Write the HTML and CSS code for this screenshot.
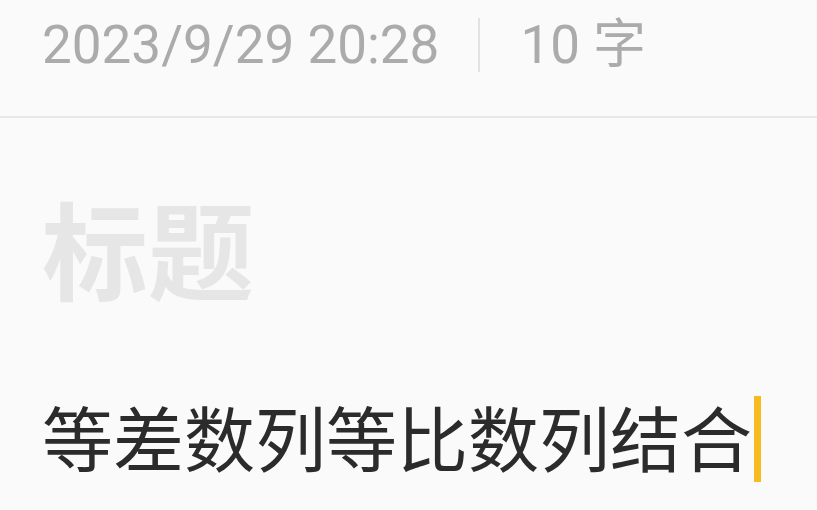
FILE: index.html
```html
<!DOCTYPE html>
<html lang="zh-CN">
<head>
<meta charset="utf-8">
<link rel="stylesheet" href="styles.css">
</head>
<body>
<div class="note">
  <header class="meta">
    <span class="date">2023/9/29 20:28</span>
    <span class="sep"></span>
    <span class="count">10 字</span>
  </header>
  <div class="title">标题</div>
  <div class="content"><span class="text">等差数列等比数列结合</span><span class="cursor"></span></div>
</div>
</body>
</html>
```
FILE: styles.css
```css
html, body {
  margin: 0;
  padding: 0;
  background: #fafafa;
  width: 817px;
  height: 510px;
  overflow: hidden;
}
.note {
  font-family: "Noto Sans CJK SC", "Noto Sans", sans-serif;
}
.meta {
  border-bottom: 2px solid #e8e8e8;
  display: flex;
  align-items: flex-start;
  padding-left: 42px;
  box-sizing: border-box;
  height: 118px;
  font-family: Roboto, "Noto Sans CJK SC", sans-serif;
  font-size: 53px;
  color: #ababab;
}
.date {
  line-height: 54px;
  margin-top: 18px;
}
.sep {
  width: 2px;
  height: 54px;
  background: #e2e2e2;
  margin: 18px 40px 0 39px;
}
.count {
  line-height: 54px;
  margin-top: 18px;
}
.title {
  padding-left: 42px;
  margin-top: 68px;
  font-size: 106px;
  line-height: 120px;
  font-weight: 700;
  color: #e6e6e6;
}
.content {
  padding-left: 42px;
  margin-top: 82px;
  font-size: 71px;
  line-height: 90px;
  color: #2b2b2b;
  display: flex;
  align-items: center;
}
.cursor {
  width: 7px;
  height: 86px;
  background: #f7bb1f;
  margin-left: 2px;
  margin-top: 8px;
}
```
